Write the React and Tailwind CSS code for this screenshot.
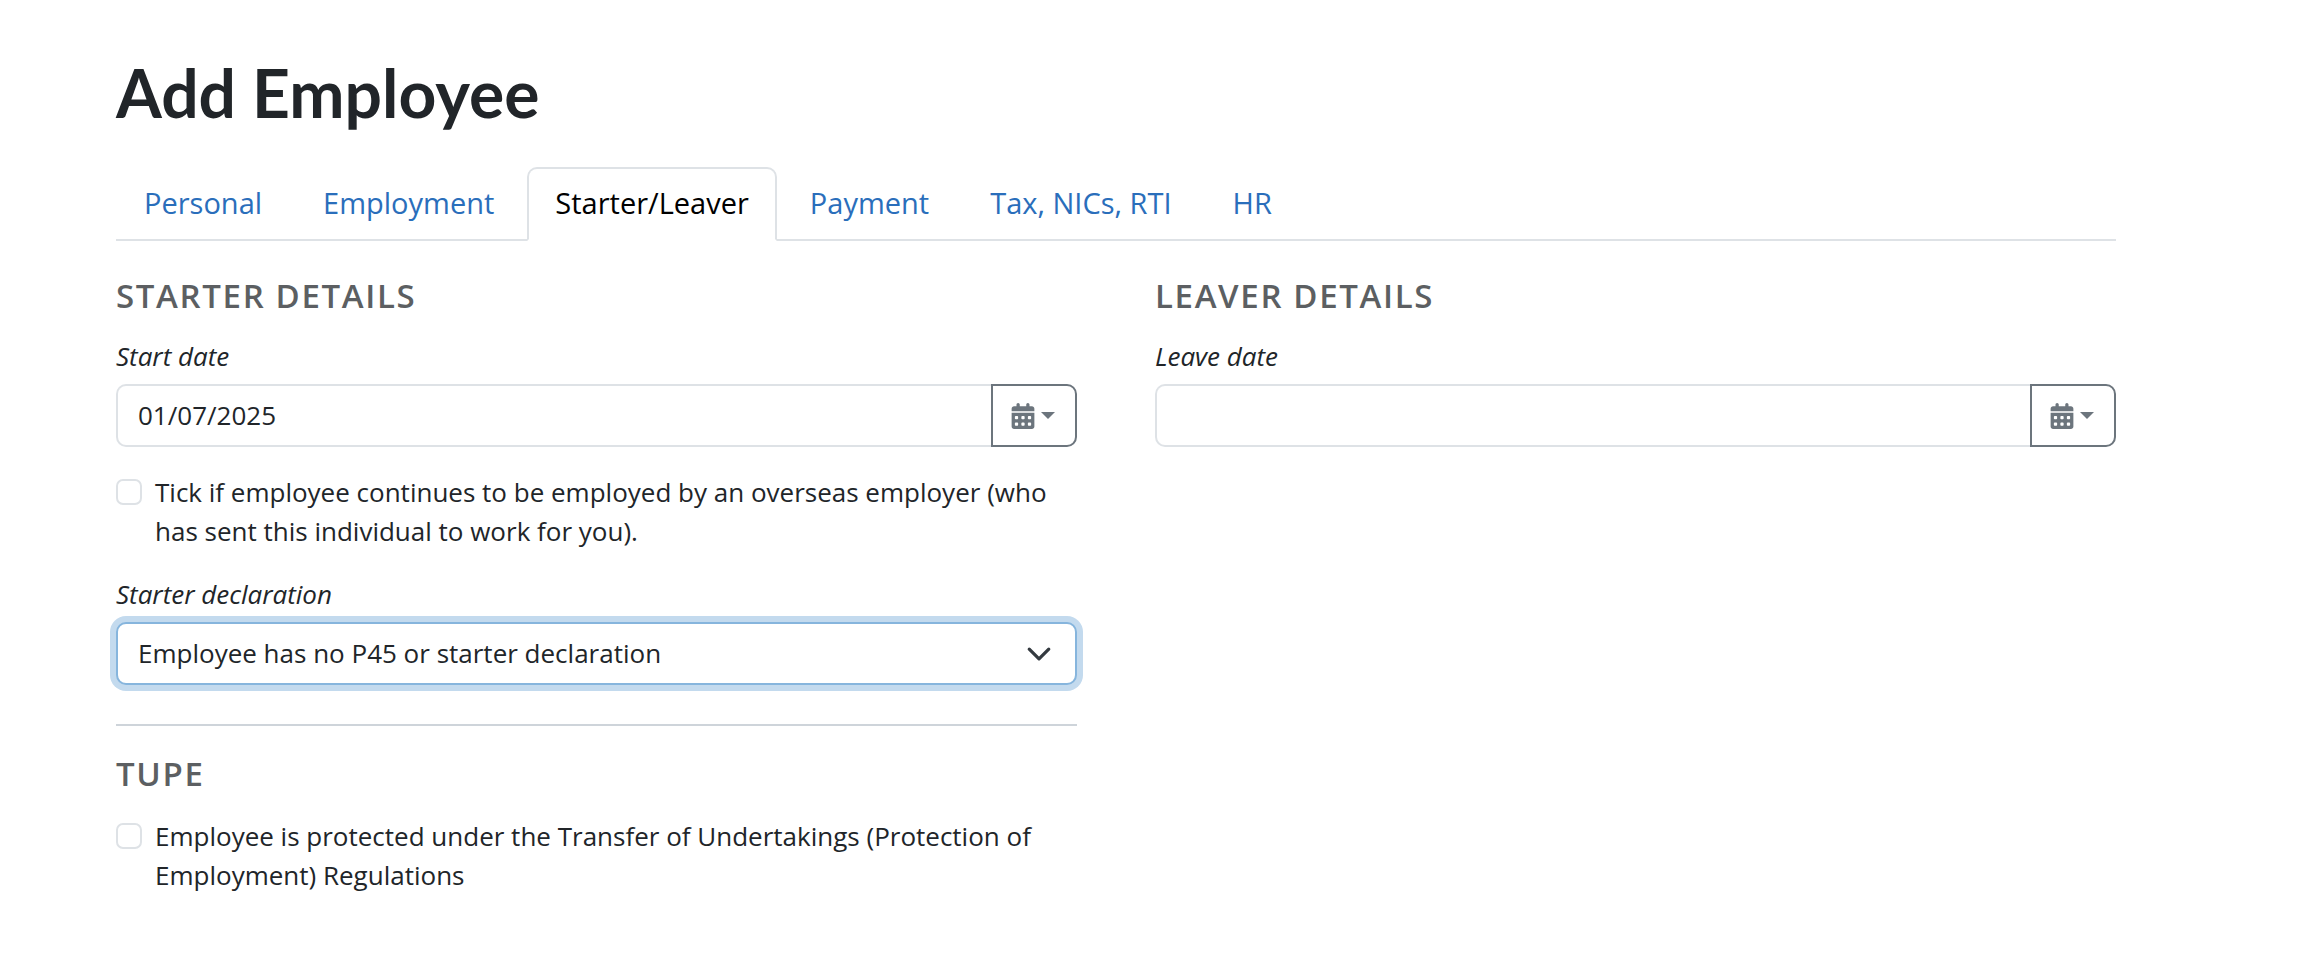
import React, { useState } from 'react';
import { FaCalendarDays } from 'react-icons/fa6';

const TABS = ['Personal', 'Employment', 'Starter/Leaver', 'Payment', 'Tax, NICs, RTI', 'HR'];

const DECLARATIONS = [
  'Employee has no P45 or starter declaration',
  'Employee has a P45',
  'Employee has a starter declaration',
];

const SectionHeading = ({ children }) => (
  <h2 className="text-[33px] leading-10 font-semibold uppercase tracking-wider text-[#5c5f62]">
    {children}
  </h2>
);

const DateField = ({ id, label, value, onChange }) => (
  <div>
    <label htmlFor={id} className="block mb-2 italic">
      {label}
    </label>
    <div className="flex h-[63px]">
      <input
        id={id}
        type="text"
        value={value}
        onChange={(e) => onChange(e.target.value)}
        className="min-w-0 flex-1 rounded-l-[10px] border-2 border-r-0 border-[#dee2e6] bg-white px-5 outline-none"
      />
      <button
        type="button"
        aria-label={`Choose ${label.toLowerCase()}`}
        className="flex w-[86px] items-center justify-center gap-1.5 rounded-r-[10px] border-2 border-[#6c757d] pr-0.5 text-[#6c757d]"
      >
        <FaCalendarDays className="h-[26px] w-6" />
        <svg viewBox="0 0 14 7" className="h-[7px] w-[14px]" fill="currentColor" aria-hidden="true">
          <path d="M0 0h14L7 7z" />
        </svg>
      </button>
    </div>
  </div>
);

const CheckField = ({ id, children }) => (
  <div className="flex gap-[13px]">
    <input
      id={id}
      type="checkbox"
      className="mt-1.5 size-[26px] shrink-0 appearance-none rounded-[7px] border-2 border-[#dee2e6] bg-white checked:bg-[#2a6ebb]"
    />
    <label htmlFor={id}>{children}</label>
  </div>
);

const App = () => {
  const [activeTab, setActiveTab] = useState('Starter/Leaver');
  const [startDate, setStartDate] = useState('01/07/2025');
  const [leaveDate, setLeaveDate] = useState('');
  const [declaration, setDeclaration] = useState(DECLARATIONS[0]);

  return (
    <main className="min-h-screen bg-white pt-[54px] pr-[194px] pb-16 pl-[116px] font-['Open_Sans',sans-serif] text-[26px] leading-[39px] text-[#212529]">
      <h1 className="font-['Lato',sans-serif] text-[66px] leading-[78px] font-bold">Add Employee</h1>

      {/* Tabs */}
      <div role="tablist" className="mt-[35px] flex gap-[5px] border-b-2 border-[#dee2e6]">
        {TABS.map((tab) => (
          <button
            key={tab}
            type="button"
            role="tab"
            aria-selected={activeTab === tab}
            onClick={() => setActiveTab(tab)}
            className={`-mb-0.5 rounded-t-[10px] border-2 px-[26px] pt-3 pb-3.5 text-[29px] leading-[44px] ${
              activeTab === tab
                ? 'border-[#dee2e6] border-b-white bg-white text-black'
                : 'border-transparent text-[#2a6ebb]'
            }`}
          >
            {tab}
          </button>
        ))}
      </div>

      <div className="mt-[35px] grid grid-cols-2 gap-[78px]">
        {/* Starter details */}
        <section>
          <SectionHeading>Starter details</SectionHeading>
          <div className="mt-[21px]">
            <DateField id="start-date" label="Start date" value={startDate} onChange={setStartDate} />
          </div>
          <div className="mt-[26px]">
            <CheckField id="overseas">
              Tick if employee continues to be employed by an overseas employer (who has sent this
              individual to work for you).
            </CheckField>
          </div>

          <div className="mt-6">
            <label htmlFor="declaration" className="block mb-2 italic">
              Starter declaration
            </label>
            <div className="relative">
              <select
                id="declaration"
                value={declaration}
                onChange={(e) => setDeclaration(e.target.value)}
                className="block h-[63px] w-full appearance-none rounded-[10px] border-2 border-[#86b5dd] bg-white pr-16 pl-5 ring-[6px] ring-[#c3daee] outline-none"
              >
                {DECLARATIONS.map((option) => (
                  <option key={option}>{option}</option>
                ))}
              </select>
              <svg
                viewBox="0 0 16 16"
                className="pointer-events-none absolute top-1/2 right-[25px] size-[26px] -translate-y-1/2"
                fill="none"
                stroke="#343a40"
                strokeWidth="2"
                strokeLinecap="round"
                strokeLinejoin="round"
                aria-hidden="true"
              >
                <path d="m2 5 6 6 6-6" />
              </svg>
            </div>
          </div>

          <hr className="mt-[39px] mb-7 border-t-2 border-[#ced4da]" />

          <SectionHeading>Tupe</SectionHeading>
          <div className="mt-[23px]">
            <CheckField id="tupe">
              Employee is protected under the Transfer of Undertakings (Protection of Employment)
              Regulations
            </CheckField>
          </div>
        </section>

        {/* Leaver details */}
        <section>
          <SectionHeading>Leaver details</SectionHeading>
          <div className="mt-[21px]">
            <DateField id="leave-date" label="Leave date" value={leaveDate} onChange={setLeaveDate} />
          </div>
        </section>
      </div>
    </main>
  );
};

export default App;
